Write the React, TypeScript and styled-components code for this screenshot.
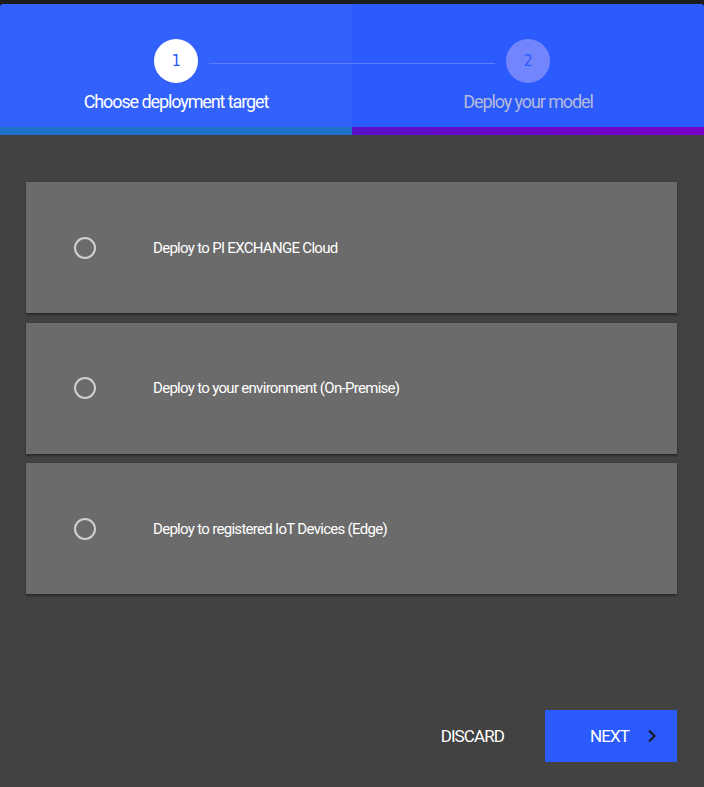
import React, { useState } from "react";
import styled, { createGlobalStyle } from "styled-components";

const Global = createGlobalStyle`
  html, body { margin: 0; padding: 0; background: #1c1c1c; }
  body { font-family: Roboto, "Noto Sans", sans-serif; }
  * { box-sizing: border-box; }
`;

const Dialog = styled.div`
  margin-top: 4px;
  width: 704px;
  height: 783px;
  background: #424242;
  border-radius: 4px 4px 0 0;
  overflow: hidden;
  display: flex;
  flex-direction: column;
`;

const Stepper = styled.div`
  display: grid;
  grid-template-columns: 1fr 1fr;
  position: relative;
  background: #2b5bfc;
`;

const Step = styled.div<{ $active: boolean }>`
  display: flex;
  flex-direction: column;
  align-items: center;
  height: 131px;
  padding-top: 35px;
  background: ${(p) => (p.$active ? "#3361fb" : "#2b5bfc")};
  border-bottom: 8px solid ${(p) => (p.$active ? "#1f70c9" : "transparent")};
  border-image: ${(p) =>
    p.$active ? "none" : "linear-gradient(90deg, #5a0fc9, #7a00c8) 1"};
`;

const Circle = styled.div<{ $active: boolean }>`
  width: 44px;
  height: 44px;
  border-radius: 50%;
  display: flex;
  align-items: center;
  justify-content: center;
  background: ${(p) => (p.$active ? "#ffffff" : "#7385fd")};
  color: #2b5bfc;
  font-size: 15px;
  font-family: "DejaVu Sans Mono", monospace;
  position: relative;
  z-index: 1;
`;

const StepLabel = styled.div<{ $active: boolean }>`
  margin-top: 8px;
  font-size: 18px;
  letter-spacing: -1.1px;
  color: ${(p) => (p.$active ? "#ffffff" : "#b3b9dc")};
`;

const Connector = styled.div`
  position: absolute;
  left: 209px;
  right: 209px;
  top: 59px;
  height: 1px;
  background: #5c80fd;
`;

const Body = styled.div`
  flex: 1;
  display: flex;
  flex-direction: column;
  padding: 47px 27px 0 26px;
`;

const Options = styled.div`
  display: flex;
  flex-direction: column;
  gap: 9.5px;
`;

const Card = styled.label`
  height: 131px;
  background: #6b6b6b;
  display: flex;
  align-items: center;
  box-shadow: 0 2px 2px rgba(0, 0, 0, 0.35), 0 0 1px rgba(0, 0, 0, 0.3);
  cursor: pointer;
`;

const Radio = styled.span<{ $checked: boolean }>`
  margin-left: 48px;
  width: 22px;
  height: 22px;
  border-radius: 50%;
  border: 2px solid #d0d0d0;
  display: flex;
  align-items: center;
  justify-content: center;
  &::after {
    content: "";
    width: 10px;
    height: 10px;
    border-radius: 50%;
    background: ${(p) => (p.$checked ? "#d0d0d0" : "transparent")};
  }
`;

const OptionText = styled.span`
  margin-left: 57px;
  font-size: 15px;
  letter-spacing: -0.7px;
  color: #ffffff;
`;

const Footer = styled.div`
  margin-top: auto;
  display: flex;
  justify-content: flex-end;
  align-items: center;
  gap: 41px;
  padding-bottom: 25px;
`;

const TextButton = styled.button`
  background: none;
  border: none;
  color: #ffffff;
  font-family: Roboto, sans-serif;
  font-size: 17px;
  letter-spacing: -0.9px;
  padding: 0;
  cursor: pointer;
`;

const PrimaryButton = styled.button`
  width: 132px;
  height: 52px;
  background: #2b5bfc;
  border: none;
  color: #ffffff;
  font-family: Roboto, sans-serif;
  font-size: 17px;
  letter-spacing: -0.9px;
  display: flex;
  align-items: center;
  justify-content: flex-end;
  padding-right: 20px;
  gap: 18px;
  cursor: pointer;
`;

const options = [
  "Deploy to PI EXCHANGE Cloud",
  "Deploy to your environment (On-Premise)",
  "Deploy to registered IoT Devices (Edge)",
];

export default function App() {
  const [sel, setSel] = useState<number | null>(null);
  return (
    <>
      <Global />
      <Dialog>
        <Stepper>
          <Connector />
          <Step $active>
            <Circle $active>1</Circle>
            <StepLabel $active>Choose deployment target</StepLabel>
          </Step>
          <Step $active={false}>
            <Circle $active={false}>2</Circle>
            <StepLabel $active={false}>Deploy your model</StepLabel>
          </Step>
        </Stepper>
        <Body>
          <Options>
            {options.map((o, i) => (
              <Card key={o} onClick={() => setSel(i)}>
                <Radio $checked={sel === i} />
                <OptionText>{o}</OptionText>
              </Card>
            ))}
          </Options>
          <Footer>
            <TextButton>DISCARD</TextButton>
            <PrimaryButton>
              NEXT
              <svg width="10" height="14" viewBox="0 0 10 14">
                <path d="M2 1.5 L7.5 7 L2 12.5" stroke="#1a1a2e" strokeWidth="2.2" fill="none" />
              </svg>
            </PrimaryButton>
          </Footer>
        </Body>
      </Dialog>
    </>
  );
}
